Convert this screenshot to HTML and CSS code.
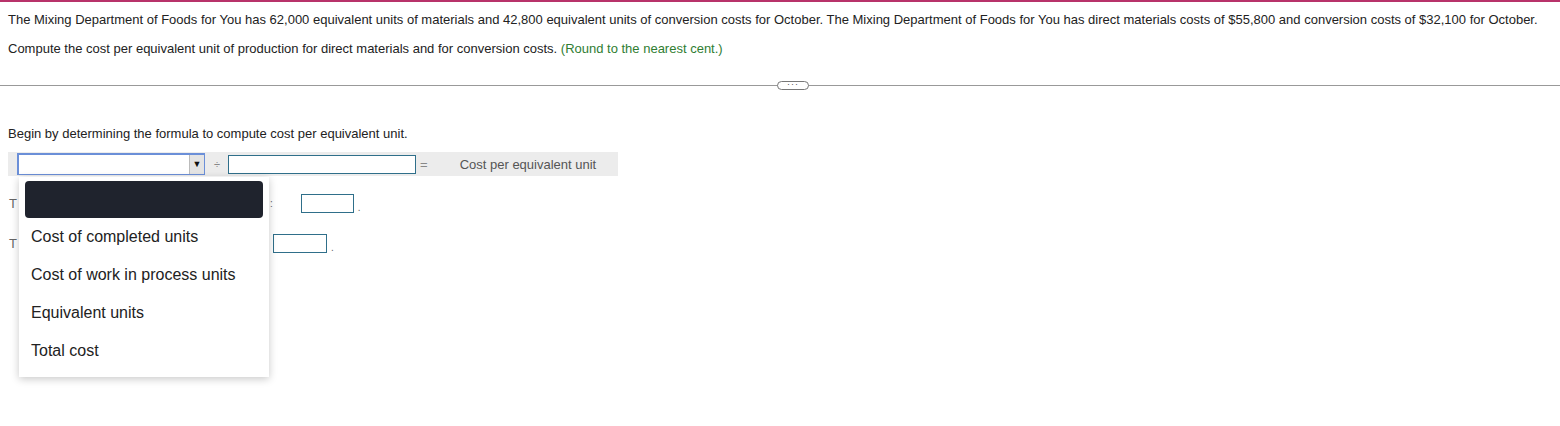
FILE: index.html
```html
<!DOCTYPE html>
<html lang="en">
<head>
    <meta charset="UTF-8">
    <title>Cost per equivalent unit</title>
    <link rel="stylesheet" href="styles.css">
</head>
<body>

<div class="question">
    <p class="q-line">The Mixing Department of Foods for You has 62,000 equivalent units of materials and 42,800 equivalent units of conversion costs for October. The Mixing Department of Foods for You has direct materials costs of $55,800 and conversion costs of $32,100 for October.</p>
    <p class="q-line">Compute the cost per equivalent unit of production for direct materials and for conversion costs. <span class="hint">(Round to the nearest cent.)</span></p>
</div>

<div class="divider">
    <span class="pill">&middot;&middot;&middot;</span>
</div>

<div class="work">
    <p class="lead">Begin by determining the formula to compute cost per equivalent unit.</p>

    <div class="formula">
        <div class="select-box">
            <span class="select-text"></span>
            <span class="select-arrow">&#9660;</span>
        </div>
        <span class="op">&divide;</span>
        <div class="input-box wide"></div>
        <span class="op eq">=</span>
        <span class="result">Cost per equivalent unit</span>

        <div class="menu">
            <div class="menu-head"></div>
            <div class="menu-item">Cost of completed units</div>
            <div class="menu-item">Cost of work in process units</div>
            <div class="menu-item">Equivalent units</div>
            <div class="menu-item">Total cost</div>
        </div>
    </div>

    <div class="answer-row first">
        <span class="label">T</span>
        <span class="colon">:</span>
        <div class="input-box small"></div>
        <span class="dot">.</span>
    </div>
    <div class="answer-row second">
        <span class="label">T</span>
        <div class="input-box small"></div>
        <span class="dot">.</span>
    </div>
</div>

</body>
</html>
```

FILE: styles.css
```css
html {
    height: 100%;
}
body {
    font-family: "Liberation Sans", Arial, sans-serif;
    font-size: 13px;
    color: #222;
    background-color: #fff;
    margin: 0;
    min-height: 424px;
    border-top: 2px solid #b8336a;
}
p {
    margin: 0;
}
.question {
    padding: 3px 8px 0;
}
.q-line {
    line-height: 29px;
}
.hint {
    color: #2f7d32;
}
.divider {
    margin-top: 22px;
    height: 1px;
    background-color: #999;
    position: relative;
}
.pill {
    position: absolute;
    left: 777px;
    top: -4px;
    width: 30px;
    height: 7px;
    border: 1px solid #777;
    border-radius: 5px;
    background: #fff;
    font-size: 9px;
    line-height: 5px;
    text-align: center;
    color: #555;
    letter-spacing: 1px;
}
.work {
    padding: 40px 8px 0 8px;
}
.lead {
    line-height: 16px;
    margin-bottom: 10px;
}
.formula {
    position: relative;
    display: flex;
    align-items: center;
    width: 610px;
    height: 24px;
    background-color: #ececec;
}
.select-box {
    display: flex;
    margin-left: 9px;
    width: 185px;
    height: 19px;
    border: 1px solid #6b8fd8;
    border-top: 2px solid #6b8fd8;
    border-left: 2px solid #6b8fd8;
    background: #fff;
}
.select-text {
    flex: 1;
}
.select-arrow {
    width: 14px;
    border-left: 1px solid #bbb;
    background: #e4e4e4;
    font-size: 9px;
    line-height: 19px;
    text-align: center;
    color: #111;
}
.op {
    color: #888;
    font-size: 11px;
    margin: 0 8px 0 9px;
}
.op.eq {
    font-size: 13px;
    margin: 0 0 0 4px;
}
.input-box {
    border: 1px solid #2f6f8a;
    background: #fff;
}
.input-box.wide {
    width: 186px;
    height: 17px;
}
.input-box.small {
    width: 51px;
    height: 17px;
}
.result {
    margin-left: 32px;
    color: #555;
    font-size: 13px;
}
.answer-row {
    display: flex;
    align-items: center;
    height: 20px;
    color: #666;
}
.answer-row .label {
    margin-left: 1px;
}
.answer-row.first {
    margin-top: 17px;
}
.answer-row.first .colon {
    margin-left: 253px;
    font-size: 10px;
}
.answer-row.first .input-box {
    margin-left: 28px;
}
.answer-row.second {
    margin-top: 20px;
}
.answer-row.second .input-box {
    margin-left: 256px;
    width: 52px;
}
.dot {
    margin-left: 4px;
    font-size: 10px;
    align-self: flex-end;
}
.menu {
    position: absolute;
    left: 11px;
    top: 25px;
    z-index: 2;
    width: 250px;
    height: 200px;
    background: #fff;
    box-shadow: 0 2px 8px rgba(0, 0, 0, 0.22);
    padding: 4px 6px 0;
    box-sizing: border-box;
}
.menu-head {
    height: 37px;
    background-color: #1f232d;
    border-radius: 4px;
}
.menu-item {
    font-size: 16px;
    color: #222;
    height: 38px;
    line-height: 38px;
    padding-left: 6px;
}
```
